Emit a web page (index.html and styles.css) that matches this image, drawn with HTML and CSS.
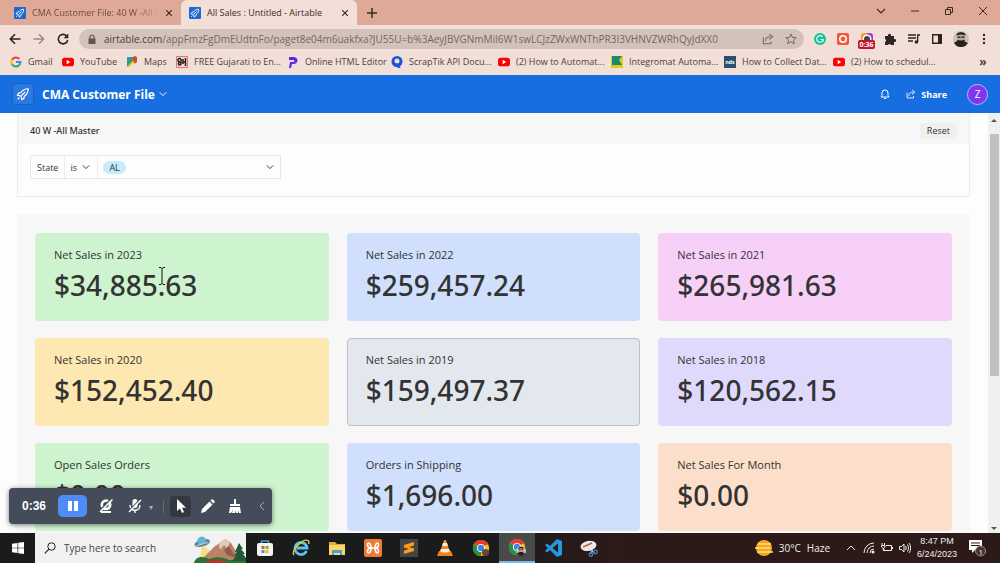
FILE: index.html
```html
<!DOCTYPE html>
<html lang="en">
<head>
    <meta charset="utf-8">
    <title>All Sales : Untitled - Airtable</title>
    <meta name="viewport" content="width=device-width, initial-scale=1.0">
    <link rel="stylesheet" href="styles.css">
</head>
<body>
    <!-- Shared icons -->
    <svg class="sprite" aria-hidden="true">
        <symbol id="rocket" viewBox="0 0 16 16">
            <path d="M14 2c-4 0-6.500 1.500-8.500 4.500L3 7 1.500 9.500 4.500 9.800l1.700 1.700.3 3L9 13l.5-2.500C12.500 8.500 14 6 14 2z" fill="none" stroke="currentColor" stroke-width="1.400" stroke-linejoin="round"/>
            <path d="M6 10l4.500-4.500M2 14l2-2" stroke="currentColor" stroke-width="1.400"/>
        </symbol>
        <symbol id="close" viewBox="0 0 10 10">
            <path d="M1.500 1.500l7 7M8.500 1.500l-7 7" stroke="currentColor" stroke-width="1.500"/>
        </symbol>
        <symbol id="chevron" viewBox="0 0 10 10">
            <path d="M1 3l4 4 4-4" fill="none" stroke="currentColor" stroke-width="1.200"/>
        </symbol>
        <symbol id="share" viewBox="0 0 14 14">
            <path d="M1.500 5v7.500h9V10M4 9.500C4 6 6.500 4.500 10 4.500M8.500 1.500l4 3-4 3" fill="none" stroke="currentColor" stroke-width="1.200"/>
        </symbol>
        <symbol id="play" viewBox="0 0 14 12">
            <rect y="1" width="14" height="10" rx="3" fill="#f00"/>
            <path d="M5.500 3.500v5L9.500 6z" fill="#fff"/>
        </symbol>
        <symbol id="chrome" viewBox="0 0 20 20">
            <circle cx="10" cy="10" r="9" fill="#fbc116"/>
            <path d="M10 10L2.200 5.500A9 9 0 0 1 17.800 5.500z" fill="#e33b2e"/>
            <path d="M10 10L2.200 5.500A9 9 0 0 0 10 19z" fill="#229342"/>
            <path d="M2.200 5.500A9 9 0 0 1 18 6H10z" fill="#e33b2e"/>
            <circle cx="10" cy="10" r="4.500" fill="#fff"/>
            <circle cx="10" cy="10" r="3.500" fill="#3b82ea"/>
        </symbol>
        <symbol id="face" viewBox="0 0 16 16">
            <circle cx="8" cy="8" r="8" fill="#c9c2bb"/>
            <path d="M1 12c2-2 4-2 7-1 3-1 5 0 7 1a8 8 0 0 1-14 0z" fill="#282624"/>
            <path d="M4 4c1-4 8-4 8 0v5c-1 4-7 4-8 0z" fill="#c3a48f"/>
            <path d="M3.500 4.500C3 0 13 0 12.500 4.500 10 3 6 3 3.500 4.500zM4 9c2 .5 6 .5 8 0-.5 5-7.500 5-8 0zM4.500 5.500h3v1.300h-3zM8.500 5.500h3v1.300h-3z" fill="#211e1d"/>
        </symbol>
    </svg>

    <!-- Browser tabs -->
    <div class="tabs">
        <div class="tab">
            <span class="favicon"><svg><use href="#rocket"/></svg></span>
            <span class="tab-title faded">CMA Customer File: 40 W -All M</span>
            <button class="icon-btn" aria-label="Close tab"><svg class="i8"><use href="#close"/></svg></button>
        </div>
        <div class="tab active">
            <span class="favicon"><svg><use href="#rocket"/></svg></span>
            <span class="tab-title">All Sales : Untitled - Airtable</span>
            <button class="icon-btn" aria-label="Close tab"><svg class="i8"><use href="#close"/></svg></button>
        </div>
        <button class="icon-btn new-tab" aria-label="New tab"><svg class="i10" viewBox="0 0 10 10"><path d="M5 0v10M0 5h10" stroke="currentColor" stroke-width="1.500"/></svg></button>
        <div class="window-controls">
            <button class="icon-btn" aria-label="Search tabs"><svg class="i10"><use href="#chevron"/></svg></button>
            <button class="icon-btn" aria-label="Minimize"><svg class="i8" viewBox="0 0 8 8"><path d="M0 4h8" stroke="currentColor"/></svg></button>
            <button class="icon-btn" aria-label="Restore"><svg class="i8" viewBox="0 0 8 8"><path d="M.5 2.500h5v5h-5zM2.500 2V.5h5v5H6" fill="none" stroke="currentColor"/></svg></button>
            <button class="icon-btn" aria-label="Close"><svg class="i8" viewBox="0 0 8 8"><path d="M0 0l8 8M8 0L0 8" stroke="currentColor"/></svg></button>
        </div>
    </div>

    <!-- Address bar -->
    <div class="toolbar">
        <div class="nav-buttons">
            <button class="icon-btn" aria-label="Back"><svg class="i12" viewBox="0 0 12 12"><path d="M11.500 6H1.500M6 1.200L1.300 6 6 10.800" fill="none" stroke="currentColor" stroke-width="1.600"/></svg></button>
            <button class="icon-btn dim" aria-label="Forward"><svg class="i12" viewBox="0 0 12 12"><path d="M.5 6h10M6 1.200L10.700 6 6 10.800" fill="none" stroke="currentColor" stroke-width="1.400"/></svg></button>
            <button class="icon-btn" aria-label="Reload"><svg class="i12" viewBox="0 0 12 12"><path d="M10 3.500A4.700 4.700 0 1 0 10.700 7" fill="none" stroke="currentColor" stroke-width="1.600"/><path d="M11.300.5v4.700H6.600z" fill="currentColor"/></svg></button>
        </div>
        <div class="address">
            <svg class="i10" viewBox="0 0 10 10"><path d="M1.500 4.500h7V10h-7z" fill="#5f5652"/><path d="M3 5V3a2 2 0 0 1 4 0v2" fill="none" stroke="#5f5652" stroke-width="1.200"/></svg>
            <span class="url"><b>airtable.com</b>/appFmzFgDmEUdtnFo/paget8e04m6uakfxa?JU55U=b%3AeyJBVGNmMiI6W1swLCJzZWxWNThPR3I3VHNVZWRhQyJdXX0</span>
            <button class="icon-btn" aria-label="Share page"><svg class="i12"><use href="#share"/></svg></button>
            <button class="icon-btn" aria-label="Bookmark"><svg class="i12" viewBox="0 0 12 12"><path d="M6 1l1.500 3.400 3.700.3-2.800 2.400.9 3.600L6 8.800l-3.300 1.900.9-3.600L.8 4.700l3.700-.3z" fill="none" stroke="currentColor"/></svg></button>
        </div>
        <div class="extensions">
            <button class="icon-btn" aria-label="Grammarly"><svg class="i12" viewBox="0 0 12 12"><circle cx="6" cy="6" r="6" fill="#15c39a"/><path d="M8.500 3.700A3.300 3.300 0 1 0 9.300 6.500H6.500M9.200 6.500v2" fill="none" stroke="#fff" stroke-width="1.200"/></svg></button>
            <button class="icon-btn" aria-label="Recorder"><svg class="i12" viewBox="0 0 12 12"><rect width="12" height="12" rx="2" fill="#f4583a"/><circle cx="6" cy="6" r="3.200" fill="none" stroke="#fff" stroke-width="1.500"/></svg></button>
            <button class="icon-btn" aria-label="Screen capture">
                <svg class="i12" viewBox="0 0 12 12"><path d="M0 8V3a3 3 0 0 1 3-3h3v8z" fill="#f79b22"/><path d="M6 0h3a3 3 0 0 1 3 3v5H6z" fill="#a43bd8"/><circle cx="6" cy="6" r="4.500" fill="#fff"/><circle cx="6" cy="6" r="3" fill="#47423f"/></svg>
                <span class="timer">0:36</span>
            </button>
            <button class="icon-btn" aria-label="Extensions"><svg class="i12" viewBox="0 0 12 12"><path d="M1 3h3a1.600 1.600 0 1 1 3 0h3v3a1.600 1.600 0 1 1 0 3v3H7a1.600 1.600 0 0 0-3 0H1V9a1.600 1.600 0 0 0 0-3z" fill="currentColor"/></svg></button>
            <button class="icon-btn" aria-label="Media"><svg class="i12" viewBox="0 0 12 12"><path d="M0 2h8M0 5h8M0 8h5M12 2H9.700v7" fill="none" stroke="currentColor" stroke-width="1.300"/><circle cx="8.400" cy="9" r="1.800" fill="currentColor"/></svg></button>
            <button class="icon-btn" aria-label="Side panel"><svg class="i12" viewBox="0 0 12 12"><path d="M1.700 1.700h8.600v8.600H1.700z" fill="none" stroke="currentColor" stroke-width="1.400"/><path d="M7 1h4v10H7z" fill="currentColor"/></svg></button>
            <button class="icon-btn" aria-label="Profile"><svg class="i16"><use href="#face"/></svg></button>
            <button class="icon-btn" aria-label="Menu"><svg class="i12" viewBox="0 0 12 12"><g fill="currentColor"><circle cx="6" cy="2" r="1.200"/><circle cx="6" cy="6" r="1.200"/><circle cx="6" cy="10" r="1.200"/></g></svg></button>
        </div>
    </div>

    <!-- Bookmarks -->
    <nav class="bookmarks">
        <a href="#"><svg class="i12" viewBox="0 0 12 12"><g fill="none" stroke-width="2"><path d="M2 3.700A4.500 4.500 0 0 1 9.300 3" stroke="#ea4335"/><path d="M2 3.700a4.500 4.500 0 0 0 0 4.600" stroke="#fbbc05"/><path d="M2 8.300a4.500 4.500 0 0 0 7 1" stroke="#34a853"/><path d="M9 9.300A4.500 4.500 0 0 0 10.500 6H6" stroke="#4285f4"/></g></svg>Gmail</a>
        <a href="#"><svg class="i12"><use href="#play"/></svg>YouTube</a>
        <a href="#"><svg class="i12" viewBox="0 0 12 12"><path d="M1 1h10v10H1z" fill="#34a35a"/><path d="M1 11l7-7 3 3v4z" fill="#e3e3e0"/><path d="M1 6l5-5H1z" fill="#4285f4"/><path d="M2 11l7-7" stroke="#fbbc05" stroke-width="1.500"/><path d="M9 8C6 4 6.500 0 9 0s3 4 0 8z" fill="#dc4435"/></svg>Maps</a>
        <a href="#"><svg class="i12" viewBox="0 0 12 12"><path d="M.5.5h11v11H.5z" fill="#f4d7d2" stroke="#d9767a"/><path d="M5 3C1 1 1 6 4 6c-3 1-1 5 1 2V3M7 3v5M7 6h3M9.500 2v8" fill="none" stroke="#221" stroke-width="1.500"/></svg>FREE Gujarati to En...</a>
        <a href="#"><svg class="i12" viewBox="0 0 12 12"><path d="M2 1h4c6 0 6 7 0 7H5l-1 4H2l1-6h3c2 0 2-2 0-2H2z" fill="#5a29ef"/></svg>Online HTML Editor</a>
        <a href="#"><svg class="i12" viewBox="0 0 12 12"><circle cx="6" cy="5.500" r="5.500" fill="#1555d6"/><circle cx="6" cy="5" r="2.500" fill="#f2dfd8"/><path d="M5 7l5 5H7L4 9z" fill="#1555d6"/></svg>ScrapTik API Docu...</a>
        <a href="#"><svg class="i12"><use href="#play"/></svg>(2) How to Automat...</a>
        <a href="#"><svg class="i12" viewBox="0 0 12 12"><path d="M0 0h12v12H0z" fill="#e2c91d"/><path d="M1 0h10L8 4l3 5H1z" fill="#178b6b"/></svg>Integromat Automa...</a>
        <a href="#"><span class="nds">nds</span>How to Collect Dat...</a>
        <a href="#"><svg class="i12"><use href="#play"/></svg>(2) How to schedul...</a>
        <button class="icon-btn more" aria-label="More bookmarks">»</button>
    </nav>

    <!-- Airtable header -->
    <header class="app-header">
        <span class="app-logo"><svg class="i14"><use href="#rocket"/></svg></span>
        <h1>CMA Customer File</h1>
        <button class="icon-btn" aria-label="Interface menu"><svg class="i8"><use href="#chevron"/></svg></button>
        <div class="header-actions">
            <button class="icon-btn" aria-label="Notifications"><svg class="i10" viewBox="0 0 10 10"><path d="M1 8l1-1.500V4a3 3 0 0 1 6 0v2.500L9 8zM4 9.500h2" fill="none" stroke="currentColor"/></svg></button>
            <button class="share-btn"><svg class="i10"><use href="#share"/></svg>Share</button>
            <button class="avatar">Z</button>
        </div>
    </header>

    <div class="viewport">
        <main class="content">
            <section class="filters">
                <div class="filters-head">
                    <h2>40 W -All Master</h2>
                    <button class="reset">Reset</button>
                </div>
                <div class="filters-body">
                    <div class="filter">
                        <label class="field" for="state">State</label>
                        <span class="operator">
                            <select aria-label="Operator"><option>is</option></select>
                            <svg class="i8"><use href="#chevron"/></svg>
                        </span>
                        <span class="value">
                            <select id="state"><option>AL</option></select>
                            <svg class="i8"><use href="#chevron"/></svg>
                        </span>
                    </div>
                </div>
            </section>

            <section class="cards">
                <article class="card green"><h3>Net Sales in 2023</h3><p>$34,885.63</p></article>
                <article class="card blue"><h3>Net Sales in 2022</h3><p>$259,457.24</p></article>
                <article class="card pink"><h3>Net Sales in 2021</h3><p>$265,981.63</p></article>
                <article class="card yellow"><h3>Net Sales in 2020</h3><p>$152,452.40</p></article>
                <article class="card gray"><h3>Net Sales in 2019</h3><p>$159,497.37</p></article>
                <article class="card purple"><h3>Net Sales in 2018</h3><p>$120,562.15</p></article>
                <article class="card green"><h3>Open Sales Orders</h3><p>$0.00</p></article>
                <article class="card blue"><h3>Orders in Shipping</h3><p>$1,696.00</p></article>
                <article class="card orange"><h3>Net Sales For Month</h3><p>$0.00</p></article>
            </section>
        </main>
        <div class="scrollbar">
            <span class="arrow up"></span>
            <span class="thumb"></span>
            <span class="arrow down"></span>
        </div>

        <!-- Mouse cursor -->
        <svg class="cursor" viewBox="0 0 8 18"><path d="M1 .5h2l1 1 1-1h2M4 1v16M1 17.500h2l1-1 1 1h2" fill="none" stroke="#111"/></svg>
    </div>

    <!-- Screen recorder controls -->
    <div class="recorder">
        <span class="time">0:36</span>
        <button class="pause" aria-label="Pause"><svg class="i12" viewBox="0 0 12 12"><path d="M1 1h4v10H1zM7 1h4v10H7z" fill="#fff"/></svg></button>
        <button class="tool" aria-label="Camera off"><svg class="i14" viewBox="0 0 14 14"><circle cx="7" cy="5.800" r="5.500" fill="currentColor"/><circle cx="7" cy="5.800" r="2.800" fill="#454c59"/><path d="M2 12h10v2H2z" fill="currentColor"/><path d="M0 12L12 0" stroke="#454c59" stroke-width="1.500"/><path d="M1 13L13.500.5" stroke="currentColor" stroke-width="1.500"/></svg></button>
        <button class="tool mic" aria-label="Microphone off"><svg class="i14" viewBox="0 0 14 14"><rect x="4.500" y="0" width="5" height="9" rx="2.500" fill="currentColor"/><path d="M2 6c0 7 10 7 10 0M7 11v3" fill="none" stroke="currentColor" stroke-width="1.400"/><path d="M0 12.500L12 .5" stroke="#454c59" stroke-width="1.200"/><path d="M1 13L13 1" stroke="currentColor" stroke-width="1.400"/></svg></button>
        <button class="mic-menu" aria-label="Microphone options">▾</button>
        <span class="divider"></span>
        <button class="tool selected" aria-label="Pointer"><svg class="i14" viewBox="0 0 14 14"><path d="M3 0v12l3-2.500L8 14l2-1-2-4.200h4z" fill="currentColor"/></svg></button>
        <button class="tool" aria-label="Pen"><svg class="i14" viewBox="0 0 14 14"><path d="M0 14l1-4 7.500-7.500 3 3L4 13zM9.500 1.500l1-1c1-1 4 2 3 3l-1 1z" fill="currentColor"/></svg></button>
        <button class="tool" aria-label="Clear"><svg class="i14" viewBox="0 0 14 14"><path d="M6 0h2v5h4v2H2V5h4zM2 8h10l1 6h-2l-1-3v3H8v-3l-1 3H4l1-3-2 3H1z" fill="currentColor"/></svg></button>
        <button class="tool collapse" aria-label="Collapse"><svg class="i10" viewBox="0 0 10 10"><path d="M7 1L3 5l4 4" fill="none" stroke="currentColor"/></svg></button>
    </div>

    <!-- Windows taskbar -->
    <footer class="taskbar">
        <button class="start" aria-label="Start"><svg class="i12" viewBox="0 0 12 12"><path d="M0 1.700l5.500-.8v4.800H0zM6.200.8L12 0v5.700H6.200zM0 6.300h5.500v4.800L0 10.300zM6.200 6.300H12V12l-5.800-.8z" fill="#fff"/></svg></button>
        <div class="search">
            <svg class="i12" viewBox="0 0 12 12"><circle cx="7.500" cy="4.500" r="3.700" fill="none" stroke="#222"/><path d="M5 7.200L.8 11.400" stroke="#222" stroke-width="1.200"/></svg>
            <input type="text" placeholder="Type here to search" aria-label="Search">
            <svg class="scene" viewBox="0 0 52 28">
                <path d="M8 10l-2 13 14-4z" fill="#f4df83"/>
                <path d="M8 24L21 11l5-3 5-4 6 4 9 15-3 5H10z" fill="#b88468"/>
                <path d="M25 9l6-5 5 4-3 5-3-3-4 5z" fill="#e4c9b6"/>
                <path d="M30 15l5-4 7 12-9-3z" fill="#8f5d49"/>
                <path d="M0 28c2-7 9-7 15-4 8-3 14-2 20 1h17v3z" fill="#2f7135"/>
                <path d="M12 28c4-4 15-5 21 0z" fill="#b7332f"/>
                <path d="M45 8l4 6h-2l4 5h-2l3 4v3H38l4-5h-2l3-4h-2z" fill="#1f5a34"/>
                <g transform="rotate(-15 8 7)"><ellipse cx="8" cy="8" rx="8" ry="3.500" fill="#6e7f8d"/><ellipse cx="8" cy="5.500" rx="4.500" ry="4" fill="#63b5d8"/><path d="M2 9h12" stroke="#c6d5df"/></g>
            </svg>
        </div>
        <div class="apps">
            <button aria-label="Store"><svg class="i18" viewBox="0 0 18 18"><path d="M5.500 5V2h7v3" fill="none" stroke="#38a6e0" stroke-width="1.500"/><rect x="1" y="4" width="16" height="13" rx="2" fill="#f3f3f3"/><path d="M5.500 7h3v3h-3z" fill="#f05023"/><path d="M9.500 7h3v3h-3z" fill="#7db900"/><path d="M5.500 11h3v3h-3z" fill="#20a3ea"/><path d="M9.500 11h3v3h-3z" fill="#fdb800"/></svg></button>
            <button aria-label="Internet Explorer"><svg class="i18" viewBox="0 0 18 18"><path d="M14.500 12A6 6 0 1 1 15 9H5" fill="none" stroke="#55c5f1" stroke-width="2.800"/><path d="M2 16C-2 12 12-2 16.500 2c1 1 .5 2 0 3" fill="none" stroke="#f3c431" stroke-width="1.400"/></svg></button>
            <button aria-label="File Explorer"><svg class="i18" viewBox="0 0 18 18"><path d="M1 3h6l2 2h8v11H1z" fill="#e6aa3d"/><path d="M1 6h16v10H1z" fill="#fbd668"/><path d="M4 11h10v5h-2v-2H6v2H4z" fill="#4d9fd8"/></svg></button>
            <button aria-label="XAMPP"><svg class="i18" viewBox="0 0 18 18"><rect width="18" height="18" rx="2" fill="#ef7a2f"/><path d="M7 9h4M7 9C7 3 3 3 3.500 6.500 4 9 5 8.500 7 9c-2 .5-3 0-3.500 2.500C3 15 7 15 7 9zM11 9c0-6 4-6 3.500-2.500C14 9 13 8.500 11 9c2 .5 3 0 3.500 2.500C15 15 11 15 11 9z" fill="none" stroke="#fff" stroke-width="1.600"/></svg></button>
            <button aria-label="Sublime Text"><svg class="i18" viewBox="0 0 18 18"><path d="M0 0h18v18H0z" fill="#444"/><path d="M4 6l10-3v3.500L9 8l5 1.500V12L4 15v-3.500L9 10 4 8.500z" fill="#ff9b1b"/></svg></button>
            <button aria-label="VLC"><svg class="i18" viewBox="0 0 18 18"><path d="M3 12h12l2 5H1z" fill="#ee8216"/><path d="M8 1h2l4 12c-2 2-8 2-10 0z" fill="#f48b1c"/><path d="M7 4h4l1 3H6zM5 10h8l1 2c-3 2-7 2-10 0z" fill="#eee"/></svg></button>
            <button aria-label="Chrome"><svg class="i18" viewBox="0 0 20 20"><use href="#chrome" width="20" height="20"/><circle cx="15" cy="15" r="4" fill="#6b4637"/></svg></button>
            <button class="running" aria-label="Chrome, profile"><svg class="i18" viewBox="0 0 20 20"><use href="#chrome" width="20" height="20"/><use href="#face" x="9" y="9" width="11" height="11"/></svg></button>
            <button aria-label="VS Code"><svg class="i18" viewBox="0 0 18 18"><path d="M13 0l5 2v14l-5 2-11-11-1-1 2-1.500L14 13.500V4.500L3 13.500 1 12l1-1z" fill="#2497df"/></svg></button>
            <button aria-label="Snipping Tool"><svg class="i18" viewBox="0 0 18 18"><ellipse cx="8.500" cy="7" rx="8" ry="5" fill="#ece7e8" transform="rotate(-12 8 7)"/><path d="M3 8l9-4" stroke="#c95750" stroke-width="1.500"/><path d="M8 10l7 4M13 9l-2 6" stroke="#c9d5dd"/><circle cx="11" cy="15.500" r="1.800" fill="none" stroke="#3e84b8" stroke-width="1.300"/><circle cx="15.500" cy="13" r="1.800" fill="none" stroke="#3e84b8" stroke-width="1.300"/></svg></button>
        </div>
        <div class="tray">
            <button class="weather"><svg class="i18" viewBox="0 0 18 18"><circle cx="9" cy="9" r="8" fill="#f7a51f"/><path d="M3 5h13M0 9h15M2 13h16" stroke="#ffdf88" stroke-width="1.700"/></svg><span>30°C</span><span>Haze</span></button>
            <button class="icon-btn" aria-label="Hidden icons"><svg class="i10" viewBox="0 0 10 10"><path d="M1 7l4-4 4 4" fill="none" stroke="currentColor"/></svg></button>
            <button class="icon-btn" aria-label="Network"><svg class="i12" viewBox="0 0 12 12"><path d="M1 11A10 10 0 0 1 11 1M4 11a7 7 0 0 1 7-7M7 11a4 4 0 0 1 4-4" fill="none" stroke="currentColor"/><circle cx="10" cy="10" r="1.500" fill="currentColor"/></svg></button>
            <button class="icon-btn" aria-label="Battery"><svg class="i12" viewBox="0 0 12 12"><path d="M5 3.500h5.500v5H3V7M11.500 5v2M1 1v2M3.500 1v2M.5 3.500H4v1.700L2.300 6.500.5 5zM2.300 6v3" fill="none" stroke="currentColor"/></svg></button>
            <button class="icon-btn" aria-label="Volume"><svg class="i12" viewBox="0 0 12 12"><path d="M.5 4.500h2L5 2v8L2.500 7.500h-2zM6.500 4q1.500 2 0 4M8.500 2.500q2.500 3.500 0 7M10 1q3.500 5 0 10" fill="none" stroke="currentColor"/></svg></button>
            <div class="clock"><span>8:47 PM</span><span>6/24/2023</span></div>
            <button class="icon-btn notice" aria-label="Notifications"><svg class="i18" viewBox="0 0 18 18"><path d="M1 1h13v10H7l-3 3v-3H1z" fill="#fff"/><path d="M3 4h9M3 6.500h9" stroke="#2b1a19"/><circle cx="12.500" cy="12" r="5" fill="#443635" stroke="#9b8f8e"/></svg><span class="count">1</span></button>
        </div>
    </footer>
</body>
</html>
```
FILE: styles.css
```css
* {
    margin: 0;
    padding: 0;
    box-sizing: border-box;
}

body {
    display: flex;
    flex-direction: column;
    height: 100vh;
    overflow: hidden;
    position: relative;
    background: #fdfdfd;
    color: #333;
    font-family: "Open Sans", "Noto Sans", sans-serif;
    font-size: 10px;
}

button,
input,
select {
    font: inherit;
    color: inherit;
    background: none;
    border: 0;
}

svg {
    display: block;
    flex: none;
}

.sprite {
    position: absolute;
    width: 0;
    height: 0;
}

.i8 { width: 8px; height: 8px; }
.i10 { width: 10px; height: 10px; }
.i12 { width: 12px; height: 12px; }
.i14 { width: 14px; height: 14px; }
.i16 { width: 16px; height: 16px; }
.i18 { width: 18px; height: 18px; }

.icon-btn {
    display: flex;
    align-items: center;
    justify-content: center;
    flex: none;
}

/* Tabs */
.tabs {
    display: flex;
    flex: none;
    height: 25px;
    background: #dfa998;
    color: #3f2b26;
    font-size: 9px;
}

.tab {
    display: flex;
    align-items: center;
    gap: 6px;
    width: 181px;
    padding: 0 8px 0 14px;
}

.tab.active {
    width: 176px;
    padding: 0 8px;
    background: #f2dfd8;
    border-radius: 6px 6px 0 0;
}

.favicon {
    display: flex;
    align-items: center;
    justify-content: center;
    flex: none;
    width: 12px;
    height: 12px;
    background: #1c69d4;
    border-radius: 1px;
    color: #fff;
}

.favicon svg {
    width: 10px;
    height: 10px;
}

.tab-title {
    flex: 1;
    min-width: 0;
    white-space: nowrap;
}

.tab-title.faded {
    color: #6d4b42;
    -webkit-mask-image: linear-gradient(to right, #000 80%, transparent);
    mask-image: linear-gradient(to right, #000 80%, transparent);
}

.new-tab {
    width: 30px;
}

.window-controls {
    display: flex;
    margin-left: auto;
    height: 21px;
}

.window-controls .icon-btn {
    width: 34px;
}

/* Address bar */
.toolbar {
    display: flex;
    align-items: center;
    flex: none;
    height: 27px;
    padding: 0 4px 0 3px;
    background: #f2dfd8;
    color: #2b2523;
}

.nav-buttons {
    display: flex;
    width: 76px;
}

.nav-buttons .icon-btn {
    width: 24px;
}

.nav-buttons .dim {
    color: #9c8983;
}

.address {
    display: flex;
    align-items: center;
    flex: 1;
    gap: 7px;
    min-width: 0;
    height: 20px;
    padding: 0 5px 0 8px;
    border-radius: 10px;
    background: #d3c2bc;
    color: #75665f;
}

.address .icon-btn {
    width: 16px;
}

.url {
    flex: 1;
    white-space: nowrap;
}

.url b {
    color: #4a3f3b;
    font-weight: 400;
}

.extensions {
    display: flex;
    justify-content: space-between;
    width: 188px;
    margin-left: 4px;
}

.extensions .icon-btn {
    position: relative;
    width: 23px;
    height: 20px;
}

.timer {
    position: absolute;
    left: 3px;
    bottom: 0;
    width: 17px;
    background: #c3142c;
    border-radius: 2px;
    color: #fff;
    font-size: 7px;
    font-weight: 700;
    line-height: 9px;
    text-align: center;
}

/* Bookmarks */
.bookmarks {
    display: grid;
    grid-template-columns: 52px 64px 50px 111px 104px 107px 113px 113px 109px 1fr 24px;
    align-items: center;
    flex: none;
    height: 23px;
    padding: 0 5px 4px 10px;
    background: #f2dfd8;
    color: #4c403c;
    font-size: 9px;
}

.bookmarks a {
    display: flex;
    align-items: center;
    gap: 6px;
    color: inherit;
    text-decoration: none;
    white-space: nowrap;
}

.nds {
    width: 12px;
    height: 12px;
    background: #29506e;
    color: #fff;
    font-size: 5px;
    font-weight: 700;
    line-height: 12px;
    text-align: center;
}

.more {
    font-size: 12px;
    font-weight: 700;
}

/* App header */
.app-header {
    display: flex;
    align-items: center;
    flex: none;
    gap: 4px;
    height: 38px;
    padding: 0 12px;
    background: #166ee1;
    color: #fff;
}

.app-logo {
    display: flex;
    align-items: center;
    justify-content: center;
    width: 22px;
    height: 22px;
    margin-right: 4px;
    border: 1px solid #1762c8;
    border-radius: 4px;
    background: #2b78e0;
}

.app-header h1 {
    font-size: 12px;
    font-weight: 700;
}

.header-actions {
    display: flex;
    align-items: center;
    gap: 16px;
    margin-left: auto;
}

.share-btn {
    display: flex;
    align-items: center;
    gap: 5px;
    margin-right: 4px;
    font-size: 9px;
    font-weight: 700;
}

.avatar {
    width: 21px;
    height: 21px;
    border: 1px solid #c8b4f5;
    border-radius: 50%;
    background: #7c37ef;
}

/* Page */
.viewport {
    display: flex;
    flex: 1;
    min-height: 0;
    overflow: hidden;
    position: relative;
}

.content {
    flex: 1;
    padding: 0 18px 0 17px;
}

.filters {
    border: 1px solid #ececec;
    border-top: 0;
}

.filters-head {
    display: flex;
    align-items: center;
    justify-content: space-between;
    height: 31px;
    padding: 4px 12px 0;
    background: #f7f7f7;
}

.filters-head h2 {
    font-family: "Noto Sans", sans-serif;
    font-size: 9px;
    font-weight: 500;
}

.reset {
    height: 16px;
    padding: 0 7px;
    background: #f0f0f0;
    border-radius: 2px;
    font-size: 9px;
    line-height: 16px;
}

.filters-body {
    padding: 11px 12px 17px;
}

.filter {
    display: flex;
    width: 251px;
    height: 24px;
    border: 1px solid #e8e8e8;
    font-size: 9px;
}

.filter > * {
    display: flex;
    align-items: center;
}

.field {
    padding: 0 6px;
    border-right: 1px solid #ececec;
}

.filter select {
    appearance: none;
    outline: none;
}

.operator {
    gap: 5px;
    padding: 0 7px 0 5px;
    border-right: 1px solid #ececec;
}

.value {
    flex: 1;
    justify-content: space-between;
    padding: 0 6px 0 11px;
    position: relative;
}

.value::before {
    content: "";
    position: absolute;
    left: 5px;
    top: 5px;
    width: 23px;
    height: 13px;
    border-radius: 7px;
    background: #c4ecfb;
}

.value select {
    flex: 1;
    position: relative;
}

.cards {
    display: grid;
    grid-template-columns: repeat(3, 1fr);
    gap: 18px;
    margin-top: 17px;
    padding: 19px 18px;
    background: #f7f7f7;
}

.card {
    height: 88px;
    margin-bottom: -1px;
    padding: 13px 18px;
    border: 1px solid transparent;
    border-radius: 4px;
}

.card h3 {
    font-size: 11px;
    font-weight: 500;
    line-height: 16px;
}

.card p {
    margin-top: 3px;
    font-family: "Noto Sans", sans-serif;
    font-size: 28px;
    font-weight: 500;
    line-height: 38px;
}

.green { background: #cdf4ce; }
.blue { background: #cfdffc; }
.pink { background: #f7d0f8; }
.yellow { background: #fde8b2; }
.gray { background: #e2e8ed; border-color: #b9bfc3; }
.purple { background: #dfd9fb; }
.orange { background: #fbdfca; }

/* Scrollbar */
.scrollbar {
    display: flex;
    flex-direction: column;
    align-items: center;
    width: 12px;
    padding: 6px 0 3px;
    background: #f0f0f0;
}

.thumb {
    width: 9px;
    height: 59%;
    margin: 12px 0 auto;
    background: #c1c1c1;
}

.arrow {
    border: 3px solid transparent;
}

.arrow.up {
    border-top: 0;
    border-bottom-color: #555;
}

.arrow.down {
    border-bottom: 0;
    border-top-color: #555;
}

.cursor {
    position: absolute;
    left: 158px;
    top: 154px;
    width: 8px;
    height: 18px;
}

/* Recorder */
.recorder {
    display: flex;
    align-items: center;
    position: absolute;
    left: 9px;
    bottom: 39px;
    height: 36px;
    padding: 0 0 0 13px;
    border-radius: 4px;
    background: #454c59;
    box-shadow: 0 1px 5px rgba(0, 0, 0, 0.5);
    color: #fff;
}

.time {
    width: 36px;
    font-family: "Liberation Sans", Arial, sans-serif;
    font-size: 12px;
    font-weight: 700;
}

.pause {
    display: flex;
    align-items: center;
    justify-content: center;
    width: 29px;
    height: 22px;
    margin-right: 8px;
    border-radius: 5px;
    background: #508cf8;
}

.tool {
    display: flex;
    align-items: center;
    justify-content: center;
    width: 21px;
    height: 21px;
    margin-right: 6px;
}

.tool.mic {
    margin: 0 0 0 2px;
}

.mic-menu {
    width: 12px;
    color: #a9adb4;
    font-size: 8px;
}

.divider {
    width: 1px;
    height: 13px;
    margin: 0 6px;
    background: #646a76;
}

.tool.selected {
    border-radius: 4px;
    background: #333843;
}

.tool.collapse {
    margin: 0;
    color: #a9adb4;
}

/* Taskbar */
.taskbar {
    display: flex;
    flex: none;
    height: 30px;
    background: linear-gradient(to right, #1a1c1b 50%, #2c1a19 62%);
    color: #eee;
}

.start {
    display: flex;
    align-items: center;
    justify-content: center;
    width: 35px;
}

.search {
    display: flex;
    align-items: center;
    gap: 8px;
    width: 211px;
    padding-left: 9px;
    background: #f1f1f1;
    color: #444;
}

.search input {
    flex: 1;
    min-width: 0;
    outline: none;
}

.search input::placeholder {
    color: #444;
}

.scene {
    align-self: flex-end;
    width: 52px;
    height: 28px;
}

.apps {
    display: flex;
    padding-left: 1px;
}

.apps button {
    display: flex;
    align-items: center;
    justify-content: center;
    width: 36px;
}

.apps .running {
    background: #494b4b;
    border-bottom: 2px solid #76b9ed;
}

.tray {
    display: flex;
    align-items: center;
    margin-left: auto;
    padding-right: 14px;
}

.tray .icon-btn {
    width: 18px;
}

.weather {
    display: flex;
    align-items: center;
    gap: 6px;
    margin-right: 12px;
}

.clock {
    display: flex;
    flex-direction: column;
    align-items: center;
    width: 46px;
    margin-right: 8px;
    font-family: "Liberation Sans", Arial, sans-serif;
    font-size: 9px;
    line-height: 13px;
}

.tray .notice {
    position: relative;
}

.count {
    position: absolute;
    right: 3px;
    bottom: 0;
    font-size: 8px;
    line-height: 11px;
}
```
